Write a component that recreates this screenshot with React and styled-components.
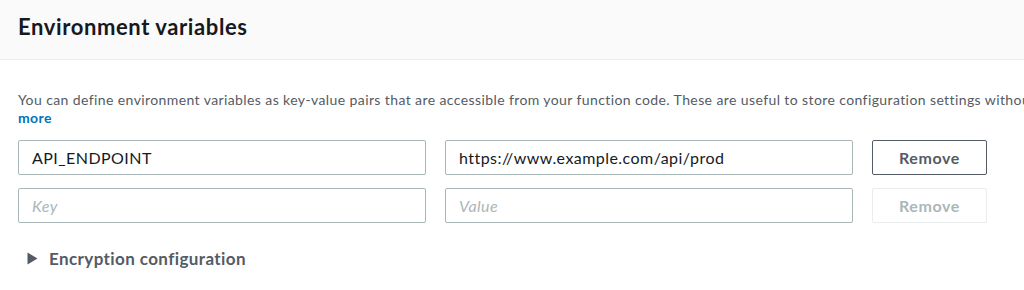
import styled, { createGlobalStyle } from 'styled-components';

const GlobalStyle = createGlobalStyle`
  html, body {
    margin: 0;
    padding: 0;
    background: #ffffff;
    overflow: hidden;
  }
  body {
    font-family: Lato, "Liberation Sans", sans-serif;
    color: #16191f;
  }
`;

const variables = [
  { key: 'API_ENDPOINT', value: 'https://www.example.com/api/prod' },
  { key: '', value: '' },
];

function App() {
  return (
    <>
      <GlobalStyle />
      <Panel>
        <Header>
          <Title>Environment variables</Title>
        </Header>
        <Body>
          <Description>
            You can define environment variables as key-value pairs that are accessible from your
            function code. These are useful to store configuration settings without the need to
            change your function code. <Link href="#">Learn more</Link>
          </Description>
          <Rows>
            {variables.map((v, i) => {
              const empty = !v.key && !v.value;
              return (
                <Row key={i}>
                  <Field defaultValue={v.key} placeholder="Key" />
                  <Field defaultValue={v.value} placeholder="Value" />
                  <RemoveButton disabled={empty}>Remove</RemoveButton>
                </Row>
              );
            })}
          </Rows>
          <Expander>
            <Caret viewBox="0 0 11 13" aria-hidden="true">
              <path d="M0.5 0.5 L10.5 6.5 L0.5 12.5 Z" fill="#545b64" />
            </Caret>
            <ExpanderLabel>Encryption configuration</ExpanderLabel>
          </Expander>
        </Body>
      </Panel>
    </>
  );
}

const Panel = styled.div`
  width: 1400px;
`;

const Header = styled.div`
  background: #fafafa;
  border-bottom: 1px solid #eaeded;
  height: 60px;
  padding: 0 18px;
  display: flex;
  align-items: center;
  box-sizing: border-box;
`;

const Title = styled.h2`
  margin: 0;
  font-size: 22px;
  letter-spacing: 0.6px;
  font-weight: 700;
  color: #16191f;
  line-height: 1;
  position: relative;
  top: -3px;
`;

const Body = styled.div`
  padding: 31px 18px 0;
`;

const Description = styled.p`
  margin: 0;
  width: 1322px;
  font-size: 14px;
  letter-spacing: 0.4px;
  line-height: 18px;
  color: #545b64;
`;

const Link = styled.a`
  color: #0073bb;
  font-weight: 700;
  text-decoration: none;
`;

const Rows = styled.div`
  display: flex;
  flex-direction: column;
  gap: 13px;
  margin-top: 13px;
`;

const Row = styled.div`
  display: flex;
  align-items: center;
`;

const Field = styled.input`
  box-sizing: border-box;
  width: 408px;
  height: 35px;
  margin-right: 19px;
  padding: 0 13px;
  border: 1px solid #aab7b8;
  border-radius: 2px;
  font-family: Lato, "Liberation Sans", sans-serif;
  font-size: 16px;
  letter-spacing: 0.45px;
  color: #16191f;
  outline: none;
  &::placeholder {
    color: #aab7b8;
    font-style: italic;
  }
`;

const RemoveButton = styled.button`
  box-sizing: border-box;
  width: 115px;
  height: 35px;
  border-radius: 2px;
  background: #ffffff;
  border: 1px solid ${(p) => (p.disabled ? '#eaeded' : '#545b64')};
  color: ${(p) => (p.disabled ? '#aab7b8' : '#545b64')};
  font-family: Lato, "Liberation Sans", sans-serif;
  font-size: 16px;
  letter-spacing: 0.6px;
  font-weight: 700;
  cursor: ${(p) => (p.disabled ? 'default' : 'pointer')};
`;

const Expander = styled.div`
  display: flex;
  align-items: center;
  gap: 11px;
  margin-top: 25px;
  padding-left: 9px;
`;

const Caret = styled.svg`
  width: 11px;
  height: 13px;
`;

const ExpanderLabel = styled.span`
  font-size: 17px;
  letter-spacing: 0.4px;
  font-weight: 700;
  color: #545b64;
`;

export default App;
